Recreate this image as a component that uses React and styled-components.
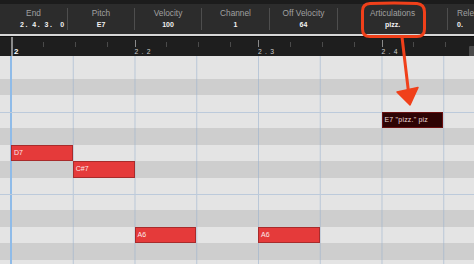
import React from 'react'
import styled, { createGlobalStyle } from 'styled-components'

const STEP = 61.75
const ORIGIN = 11
const ROW = 16.43

const GlobalStyle = createGlobalStyle`
  html, body {
    margin: 0;
    padding: 0;
    background: #e4e4e4;
    overflow: hidden;
  }
`

const fields = [
  { label: 'End', value: '2. 4. 3.  0', width: 67, pre: true },
  { label: 'Pitch', value: 'E7', width: 66 },
  { label: 'Velocity', value: '100', width: 66 },
  { label: 'Channel', value: '1', width: 67 },
  { label: 'Off Velocity', value: '64', width: 67 },
  { label: 'Articulations', value: 'pizz.', width: 109 },
  { label: 'Release', value: '0.', width: 40, left: true },
]

const beats = [
  { label: '2', bar: true },
  { label: '2 . 2' },
  { label: '2 . 3' },
  { label: '2 . 4' },
]

const rows = [
  { key: 'G7', h: 23 },
  { key: 'F#7', black: true },
  { key: 'F7' },
  { key: 'E7', line: true, notes: [{ start: 6, len: 1, label: 'E7 "pizz." piz', tip: true }] },
  { key: 'D#7', black: true },
  { key: 'D7', notes: [{ start: 0, len: 1, label: 'D7' }] },
  { key: 'C#7', black: true, notes: [{ start: 1, len: 1, label: 'C#7' }] },
  { key: 'C7' },
  { key: 'B6', line: true },
  { key: 'A#6', black: true },
  { key: 'A6', notes: [{ start: 2, len: 1, label: 'A6' }, { start: 4, len: 1, label: 'A6' }] },
  { key: 'G#6', black: true },
  { key: 'G6' },
]

export default function App() {
  return (
    <Frame>
      <GlobalStyle />
      <InfoLine>
        {fields.map((f, i) => (
          <React.Fragment key={f.label}>
            {i > 0 && <Sep />}
            <Field $w={f.width} $left={f.left}>
              <Label>{f.label}</Label>
              <Value $pre={f.pre}>{f.value}</Value>
            </Field>
          </React.Fragment>
        ))}
      </InfoLine>
      <Divider />
      <Ruler>
        {beats.map(b => (
          <Beat key={b.label} $bar={b.bar}>
            <Ticks>
              {[0, 1, 2, 3].map(t => <Tick key={t} $major={t === 0} $bar={b.bar && t === 0} />)}
            </Ticks>
            <BeatLabel $bar={b.bar}>{b.label}</BeatLabel>
          </Beat>
        ))}
        <ZoomKnob />
      </Ruler>
      <Lanes>
        {rows.map(r => (
          <Row key={r.key} $h={r.h || ROW} $black={r.black} $line={r.line}>
            {(r.notes || []).map(n => (
              <Note key={n.start} $start={n.start} $len={n.len} $tip={n.tip}>{n.label}</Note>
            ))}
          </Row>
        ))}
      </Lanes>
      <Annotation viewBox="0 0 474 264">
        <path
          d="M370 3.5 C390 2.5 408 3 417 3.5 C422 4 424.5 7 424.5 12 L424.5 29 C424.5 34 422 36.5 417 36.5 L370 36.5 C365 36.5 362.5 34 362.5 29 L362.5 11 C362.5 6 365 3.8 370 3.5 Z"
          fill="none"
          stroke="#f0401a"
          strokeWidth="3"
          strokeLinejoin="round"
        />
        <path d="M402 37 L408.5 92" stroke="#f0401a" strokeWidth="3" strokeLinecap="round" />
        <path d="M397 92 L418 87.5 L410 105 Z" fill="#f0401a" stroke="#f0401a" strokeWidth="1.5" strokeLinejoin="round" />
      </Annotation>
    </Frame>
  )
}

const Frame = styled.div`
  position: relative;
  width: 474px;
  height: 264px;
  overflow: hidden;
  font-family: "Liberation Sans", Arial, sans-serif;
  display: flex;
  flex-direction: column;
`

const InfoLine = styled.div`
  height: 30px;
  border-top: 4px solid #1c1c1c;
  background: #2c2c2c;
  display: flex;
  align-items: center;
  white-space: nowrap;
`

const Sep = styled.div`
  width: 1px;
  height: 22px;
  background: #4e4e4e;
  flex: none;
`

const Field = styled.div`
  width: ${p => p.$w}px;
  flex: none;
  display: flex;
  flex-direction: column;
  align-items: ${p => (p.$left ? 'flex-start' : 'center')};
  padding-left: ${p => (p.$left ? '9px' : '0')};
  gap: 3px;
  overflow: hidden;
`

const Label = styled.div`
  font-size: 8.3px;
  line-height: 9px;
  color: #a0a0a0;
`

const Value = styled.div`
  font-size: 7px;
  line-height: 8px;
  font-weight: bold;
  color: #f2f2f2;
  white-space: pre;
  letter-spacing: ${p => (p.$pre ? '1.5px' : '0')};
  align-self: ${p => (p.$pre ? 'flex-start' : 'auto')};
  padding-left: ${p => (p.$pre ? '20px' : '0')};
`

const Divider = styled.div`
  height: 2px;
  background: #d6d6d6;
  border-bottom: 1px solid #0e0e0e;
`

const Ruler = styled.div`
  height: 19px;
  background: #1e1e1e;
  display: flex;
  padding-left: ${ORIGIN}px;
  position: relative;
`

const Beat = styled.div`
  width: ${STEP * 2}px;
  flex: none;
  display: flex;
  flex-direction: column;
  box-shadow: ${p => (p.$bar ? 'inset 2px 0 #8a8a8a' : 'none')};
`

const Ticks = styled.div`
  display: flex;
  height: 8px;
  margin-top: 3px;
  align-items: flex-start;
`

const Tick = styled.div`
  width: ${STEP / 2}px;
  flex: none;
  height: ${p => (p.$major ? 7 : 5)}px;
  margin-top: ${p => (p.$major ? 0 : 2)}px;
  border-left: 1px solid ${p => (p.$bar ? 'transparent' : p.$major ? '#8a8a8a' : '#4a4a4a')};
`

const BeatLabel = styled.div`
  font-size: ${p => (p.$bar ? 8 : 6.8)}px;
  font-weight: ${p => (p.$bar ? 'bold' : 'normal')};
  color: ${p => (p.$bar ? '#ffffff' : '#cccccc')};
  line-height: 8px;
  padding-left: ${p => (p.$bar ? 3 : 0)}px;
  letter-spacing: ${p => (p.$bar ? 0 : 0.7)}px;
  white-space: pre;
`

const ZoomKnob = styled.div`
  position: absolute;
  right: 0;
  bottom: 0;
  width: 5px;
  height: 10px;
  background: #4a4a4a;
  border-radius: 1px 0 0 0;
`

const Lanes = styled.div`
  flex: 1;
  display: flex;
  flex-direction: column;
  overflow: hidden;
`

const Row = styled.div`
  position: relative;
  flex: none;
  height: ${p => p.$h}px;
  box-sizing: border-box;
  border-top: ${p => (p.$line ? '1px solid #bccadb' : 'none')};
  background:
    linear-gradient(to right, transparent 10px, #8fbbe8 10px, #8fbbe8 12px, transparent 12px) 0 0 / 100% 100% no-repeat,
    linear-gradient(to right, rgba(150, 175, 205, 0.55) 1px, transparent 1px) ${ORIGIN}px 0 / ${STEP}px 100% repeat-x,
    ${p => (p.$black ? '#cecece' : '#e4e4e4')};
`

const Note = styled.div`
  position: absolute;
  top: ${p => (p.$tip ? -1 : 0)}px;
  bottom: 0;
  left: ${p => ORIGIN + p.$start * STEP}px;
  width: ${p => p.$len * STEP}px;
  box-sizing: border-box;
  border: 1px solid ${p => (p.$tip ? '#6a1010' : '#a82b2b')};
  background: ${p => (p.$tip ? '#2e0404' : '#e53a3a')};
  color: ${p => (p.$tip ? '#eadada' : '#fbe9e9')};
  font-size: 7px;
  line-height: 14px;
  padding-left: 2px;
  letter-spacing: ${p => (p.$tip ? 0.2 : 0)}px;
  white-space: pre;
  overflow: hidden;
`

const Annotation = styled.svg`
  position: absolute;
  left: 0;
  top: 0;
  width: 474px;
  height: 264px;
  pointer-events: none;
`
